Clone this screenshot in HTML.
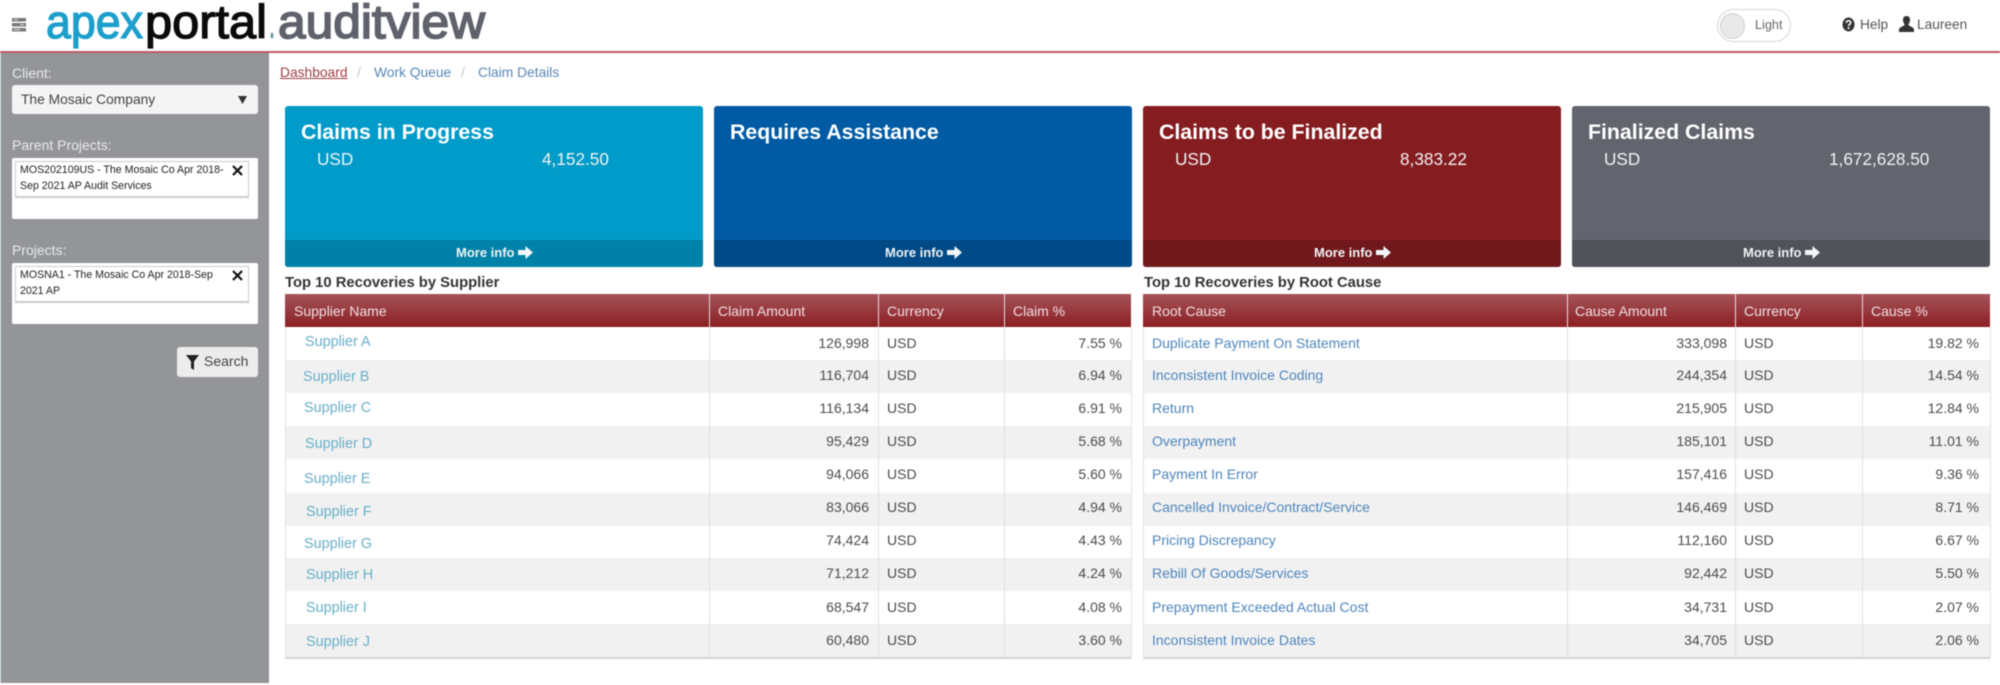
<!DOCTYPE html>
<html><head><meta charset="utf-8"><title>apexportal.auditview</title>
<style>
html,body{margin:0;padding:0;background:#fff;width:2000px;height:685px;overflow:hidden}
#p{position:relative;width:2000px;height:685px;overflow:hidden;font-family:"Liberation Sans",sans-serif;filter:blur(.45px);background:#fff}
#p div,#p span.t,#p svg{position:absolute}
.t{position:absolute;white-space:nowrap;line-height:20px;height:20px}
.sl{font-size:14px;color:#e8e9ea;left:12px}
.tag{font-size:10.6px;color:#222;left:20px}
.card{top:106px;height:161px;width:418px;border-radius:3px;overflow:hidden}
.ft{left:0;right:0;top:134px;height:27px}
.ct{font-size:21.3px;font-weight:bold;color:#fff;line-height:26px;left:16px;top:13px;white-space:nowrap}
.cv{font-size:17.2px;color:#f2f2f2;line-height:20px;top:43px;white-space:nowrap}
.mi{font-size:13px;font-weight:bold;color:#eef3f6;line-height:20px;top:137px;left:171px;white-space:nowrap}
.ar{left:233px;top:140px}
.h{position:absolute;top:294px;height:33px;background:linear-gradient(#a5545a,#8b1f24)}
.ht{font-size:14px;color:#f1dfe0;top:301px}
.vl{position:absolute;width:1px;top:327px;height:331px;background:#dcdcdc}
.s{position:absolute;height:33px;background:#f1f1f1}
.sup{font-size:14.4px;color:#69afc9;font-weight:normal}
.n{font-size:14px;color:#4c4c4c;text-align:right;width:80px}
.u{font-size:14px;color:#4c4c4c}
.lk{font-size:14px;color:#4f86bd;left:1152px}
</style></head><body>
<div id="p">
<div style="left:0;top:51px;width:2000px;height:2px;background:#bb5c62"></div>
<div style="left:0;top:53px;width:269px;height:630px;background:#939598"></div>
<div style="left:0;top:53px;width:1px;height:630px;background:#b9d3d8"></div>

<svg style="left:12px;top:18px" width="14" height="14" viewBox="0 0 14 14"><path d="M0 0h14v3.500H0zM0 5h14v3.500H0zM0 10h14v3.500H0z" fill="#77787a"/><path d="M2 1.600h4M8 6.700h4M2 11.700h6" stroke="#e4e4e4" stroke-width="1"/></svg>
<svg style="left:0;top:0" width="500" height="52" viewBox="0 0 500 52">
<text x="46" y="38" font-family="Liberation Sans" font-size="47" fill="#1c9fcb" stroke="#1c9fcb" stroke-width="1.300" textLength="97" lengthAdjust="spacingAndGlyphs">apex</text>
<text x="145" y="38" font-family="Liberation Sans" font-size="47" fill="#0b0b0b" stroke="#0b0b0b" stroke-width="1.300" textLength="122" lengthAdjust="spacingAndGlyphs">portal</text>
<text x="268" y="38" font-family="Liberation Sans" font-size="47" fill="#6b9aaa" textLength="8" lengthAdjust="spacingAndGlyphs">.</text>
<text x="278" y="38" font-family="Liberation Sans" font-size="47" fill="#5f626c" stroke="#5f626c" stroke-width="1.700" textLength="207" lengthAdjust="spacingAndGlyphs">auditview</text>
</svg>

<div style="left:1717px;top:9px;width:72px;height:31px;border:1.500px solid #d5d5d5;border-radius:17px;background:#fff"></div>
<div style="left:1720px;top:13px;width:23px;height:24px;border-radius:50%;background:#e9e9e9;border:1px solid #d0d0d0"></div>
<span class="t" style="left:1755px;top:15px;font-size:12.7px;color:#666">Light</span>
<svg style="left:1842px;top:17px" width="13" height="15" viewBox="0 0 14 16"><ellipse cx="7" cy="8" rx="6.500" ry="7.500" fill="#333"/><path d="M4.600 6.200C4.800 3.200 9.400 3.300 9.400 6c0 1.800-2.400 1.800-2.400 3.600" fill="none" stroke="#fff" stroke-width="1.700"/><path d="M6 10.800h2v2H6z" fill="#fff"/></svg>
<span class="t" style="left:1860px;top:15px;font-size:13.7px;color:#555">Help</span>
<svg style="left:1899px;top:16px" width="15" height="16" viewBox="0 0 15 16"><path d="M7.500 0c2.400 0 3.500 1.800 3.500 4 0 2-1 3.600-1.700 4.500 0 1.500 5.700 2.500 5.700 5V16H0v-2.500c0-2.500 5.700-3.500 5.700-5C5 7.600 4 6 4 4c0-2.200 1.100-4 3.500-4z" fill="#333"/></svg>
<span class="t" style="left:1917px;top:15px;font-size:13.7px;color:#555">Laureen</span>

<span class="t sl" style="top:63px">Client:</span>
<div style="left:12px;top:85px;width:246px;height:29px;background:#f4f4f4;border-radius:3px"></div>
<span class="t" style="left:21px;top:90px;font-size:13.8px;color:#444">The Mosaic Company</span>
<svg style="left:238px;top:96px" width="9" height="8" viewBox="0 0 9 8"><path d="M0 0h9L4.500 8z" fill="#333"/></svg>

<span class="t sl" style="top:135px">Parent Projects:</span>
<div style="left:12px;top:158px;width:246px;height:61px;background:#fff;border-radius:2px"></div>
<div style="left:15px;top:161px;width:232px;height:34px;border:1px solid #ccc;border-bottom-width:2px;background:#fff"></div>
<span class="t tag" style="top:160px">MOS202109US - The Mosaic Co Apr 2018-</span>
<span class="t tag" style="top:176px">Sep 2021 AP Audit Services</span>
<svg style="left:232px;top:165px" width="11" height="11" viewBox="0 0 11 11"><path d="M1 1l9 9M10 1l-9 9" stroke="#111" stroke-width="2.200"/></svg>

<span class="t sl" style="top:240px">Projects:</span>
<div style="left:12px;top:263px;width:246px;height:61px;background:#fff;border-radius:2px"></div>
<div style="left:15px;top:266px;width:232px;height:34px;border:1px solid #ccc;border-bottom-width:2px;background:#fff"></div>
<span class="t tag" style="top:265px">MOSNA1 - The Mosaic Co Apr 2018-Sep</span>
<span class="t tag" style="top:281px">2021 AP</span>
<svg style="left:232px;top:270px" width="11" height="11" viewBox="0 0 11 11"><path d="M1 1l9 9M10 1l-9 9" stroke="#111" stroke-width="2.200"/></svg>

<div style="left:177px;top:347px;width:81px;height:30px;background:#ececec;border-radius:3px"></div>
<svg style="left:186px;top:355px" width="13" height="15" viewBox="0 0 13 15"><path d="M0 0h13L8 6.500V15L5 13V6.500z" fill="#222"/></svg>
<span class="t" style="left:204px;top:351px;font-size:14px;color:#444">Search</span>

<span class="t" style="left:280px;top:63px;font-size:13.8px;color:#9c3f45;text-decoration:underline">Dashboard</span>
<span class="t" style="left:357px;top:63px;font-size:13.8px;color:#c4c4c4">/</span>
<span class="t" style="left:374px;top:63px;font-size:13.8px;color:#5a87b5">Work Queue</span>
<span class="t" style="left:461px;top:63px;font-size:13.8px;color:#c4c4c4">/</span>
<span class="t" style="left:478px;top:63px;font-size:13.8px;color:#5a87b5">Claim Details</span>

<div class="card" style="left:285px;background:#009bc9"><div class="ft" style="background:#0081a8"></div>
<div class="ct">Claims in Progress</div><div class="cv" style="left:32px">USD</div><div class="cv" style="left:257px">4,152.50</div><div class="mi">More info</div>
<svg class="ar" width="15" height="13" viewBox="0 0 15 13"><path d="M0 4h7.500V0L15 6.500 7.500 13V9H0z" fill="#f2f6f8"/></svg></div>
<div class="card" style="left:714px;background:#005aa4"><div class="ft" style="background:#004a87"></div>
<div class="ct">Requires Assistance</div><div class="mi">More info</div>
<svg class="ar" width="15" height="13" viewBox="0 0 15 13"><path d="M0 4h7.500V0L15 6.500 7.500 13V9H0z" fill="#f2f6f8"/></svg></div>
<div class="card" style="left:1143px;background:#851c20"><div class="ft" style="background:#70181b"></div>
<div class="ct">Claims to be Finalized</div><div class="cv" style="left:32px">USD</div><div class="cv" style="left:257px">8,383.22</div><div class="mi">More info</div>
<svg class="ar" width="15" height="13" viewBox="0 0 15 13"><path d="M0 4h7.500V0L15 6.500 7.500 13V9H0z" fill="#f2f6f8"/></svg></div>
<div class="card" style="left:1572px;background:#62656e"><div class="ft" style="background:#505359"></div>
<div class="ct">Finalized Claims</div><div class="cv" style="left:32px">USD</div><div class="cv" style="left:257px">1,672,628.50</div><div class="mi">More info</div>
<svg class="ar" width="15" height="13" viewBox="0 0 15 13"><path d="M0 4h7.500V0L15 6.500 7.500 13V9H0z" fill="#f2f6f8"/></svg></div>

<span class="t" style="left:285px;top:273px;font-size:14.8px;font-weight:bold;color:#333">Top 10 Recoveries by Supplier</span>
<span class="t" style="left:1144px;top:273px;font-size:14.8px;font-weight:bold;color:#333">Top 10 Recoveries by Root Cause</span>

<!-- left table -->
<div class="h" style="left:285px;width:846px"></div>
<div class="s" style="left:285px;width:846px;top:360px"></div>
<div class="s" style="left:285px;width:846px;top:426px"></div>
<div class="s" style="left:285px;width:846px;top:493px"></div>
<div class="s" style="left:285px;width:846px;top:558px"></div>
<div class="s" style="left:285px;width:846px;top:624px;height:34px"></div>
<div style="left:285px;width:846px;top:657px;height:2px;background:#d4d4d4"></div>
<div style="left:285px;width:1px;top:327px;height:331px;background:#e2e2e2"></div>
<div style="left:1131px;width:1px;top:327px;height:331px;background:#e2e2e2"></div>
<div class="vl" style="left:709px;top:294px;height:364px;background:#e4dcdc"></div>
<div class="vl" style="left:878px;top:294px;height:364px;background:#e4dcdc"></div>
<div class="vl" style="left:1004px;top:294px;height:364px;background:#e4dcdc"></div>
<span class="t ht" style="left:294px">Supplier Name</span>
<span class="t ht" style="left:718px">Claim Amount</span>
<span class="t ht" style="left:887px">Currency</span>
<span class="t ht" style="left:1013px">Claim %</span>

<span class="t sup" style="left:305px;top:332px">Supplier A</span>
<span class="t sup" style="left:303px;top:367px">Supplier B</span>
<span class="t sup" style="left:304px;top:398px">Supplier C</span>
<span class="t sup" style="left:305px;top:434px">Supplier D</span>
<span class="t sup" style="left:304px;top:469px">Supplier E</span>
<span class="t sup" style="left:306px;top:502px">Supplier F</span>
<span class="t sup" style="left:304px;top:534px">Supplier G</span>
<span class="t sup" style="left:306px;top:565px">Supplier H</span>
<span class="t sup" style="left:306px;top:598px">Supplier I</span>
<span class="t sup" style="left:306px;top:632px">Supplier J</span>

<span class="t n" style="left:789px;top:333px">126,998</span><span class="t u" style="left:887px;top:333px">USD</span><span class="t n" style="left:1042px;top:333px">7.55 %</span>
<span class="t n" style="left:789px;top:365px">116,704</span><span class="t u" style="left:887px;top:365px">USD</span><span class="t n" style="left:1042px;top:365px">6.94 %</span>
<span class="t n" style="left:789px;top:398px">116,134</span><span class="t u" style="left:887px;top:398px">USD</span><span class="t n" style="left:1042px;top:398px">6.91 %</span>
<span class="t n" style="left:789px;top:431px">95,429</span><span class="t u" style="left:887px;top:431px">USD</span><span class="t n" style="left:1042px;top:431px">5.68 %</span>
<span class="t n" style="left:789px;top:464px">94,066</span><span class="t u" style="left:887px;top:464px">USD</span><span class="t n" style="left:1042px;top:464px">5.60 %</span>
<span class="t n" style="left:789px;top:497px">83,066</span><span class="t u" style="left:887px;top:497px">USD</span><span class="t n" style="left:1042px;top:497px">4.94 %</span>
<span class="t n" style="left:789px;top:530px">74,424</span><span class="t u" style="left:887px;top:530px">USD</span><span class="t n" style="left:1042px;top:530px">4.43 %</span>
<span class="t n" style="left:789px;top:563px">71,212</span><span class="t u" style="left:887px;top:563px">USD</span><span class="t n" style="left:1042px;top:563px">4.24 %</span>
<span class="t n" style="left:789px;top:597px">68,547</span><span class="t u" style="left:887px;top:597px">USD</span><span class="t n" style="left:1042px;top:597px">4.08 %</span>
<span class="t n" style="left:789px;top:630px">60,480</span><span class="t u" style="left:887px;top:630px">USD</span><span class="t n" style="left:1042px;top:630px">3.60 %</span>

<!-- right table -->
<div class="h" style="left:1143px;width:847px"></div>
<div class="s" style="left:1143px;width:847px;top:360px"></div>
<div class="s" style="left:1143px;width:847px;top:426px"></div>
<div class="s" style="left:1143px;width:847px;top:493px"></div>
<div class="s" style="left:1143px;width:847px;top:558px"></div>
<div class="s" style="left:1143px;width:847px;top:624px;height:34px"></div>
<div style="left:1143px;width:847px;top:657px;height:2px;background:#d4d4d4"></div>
<div style="left:1143px;width:1px;top:327px;height:331px;background:#e2e2e2"></div>
<div style="left:1990px;width:1px;top:327px;height:331px;background:#e2e2e2"></div>
<div class="vl" style="left:1567px;top:294px;height:364px;background:#e4dcdc"></div>
<div class="vl" style="left:1735px;top:294px;height:364px;background:#e4dcdc"></div>
<div class="vl" style="left:1862px;top:294px;height:364px;background:#e4dcdc"></div>
<span class="t ht" style="left:1152px">Root Cause</span>
<span class="t ht" style="left:1575px">Cause Amount</span>
<span class="t ht" style="left:1744px">Currency</span>
<span class="t ht" style="left:1871px">Cause %</span>

<span class="t lk" style="top:333px">Duplicate Payment On Statement</span><span class="t n" style="left:1647px;top:333px">333,098</span><span class="t u" style="left:1744px;top:333px">USD</span><span class="t n" style="left:1899px;top:333px">19.82 %</span>
<span class="t lk" style="top:365px">Inconsistent Invoice Coding</span><span class="t n" style="left:1647px;top:365px">244,354</span><span class="t u" style="left:1744px;top:365px">USD</span><span class="t n" style="left:1899px;top:365px">14.54 %</span>
<span class="t lk" style="top:398px">Return</span><span class="t n" style="left:1647px;top:398px">215,905</span><span class="t u" style="left:1744px;top:398px">USD</span><span class="t n" style="left:1899px;top:398px">12.84 %</span>
<span class="t lk" style="top:431px">Overpayment</span><span class="t n" style="left:1647px;top:431px">185,101</span><span class="t u" style="left:1744px;top:431px">USD</span><span class="t n" style="left:1899px;top:431px">11.01 %</span>
<span class="t lk" style="top:464px">Payment In Error</span><span class="t n" style="left:1647px;top:464px">157,416</span><span class="t u" style="left:1744px;top:464px">USD</span><span class="t n" style="left:1899px;top:464px">9.36 %</span>
<span class="t lk" style="top:497px">Cancelled Invoice/Contract/Service</span><span class="t n" style="left:1647px;top:497px">146,469</span><span class="t u" style="left:1744px;top:497px">USD</span><span class="t n" style="left:1899px;top:497px">8.71 %</span>
<span class="t lk" style="top:530px">Pricing Discrepancy</span><span class="t n" style="left:1647px;top:530px">112,160</span><span class="t u" style="left:1744px;top:530px">USD</span><span class="t n" style="left:1899px;top:530px">6.67 %</span>
<span class="t lk" style="top:563px">Rebill Of Goods/Services</span><span class="t n" style="left:1647px;top:563px">92,442</span><span class="t u" style="left:1744px;top:563px">USD</span><span class="t n" style="left:1899px;top:563px">5.50 %</span>
<span class="t lk" style="top:597px">Prepayment Exceeded Actual Cost</span><span class="t n" style="left:1647px;top:597px">34,731</span><span class="t u" style="left:1744px;top:597px">USD</span><span class="t n" style="left:1899px;top:597px">2.07 %</span>
<span class="t lk" style="top:630px">Inconsistent Invoice Dates</span><span class="t n" style="left:1647px;top:630px">34,705</span><span class="t u" style="left:1744px;top:630px">USD</span><span class="t n" style="left:1899px;top:630px">2.06 %</span>
</div>
</body></html>
